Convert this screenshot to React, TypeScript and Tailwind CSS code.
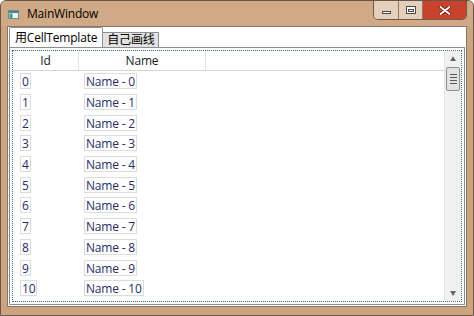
const font = { fontFamily: '"Open Sans", "Noto Sans CJK SC", sans-serif' };

function WindowIcon() {
  return (
    <svg width="11" height="9" viewBox="0 0 11 9" className="mt-[1px]">
      <rect x="0.5" y="0.5" width="10" height="8" fill="#eef3f6" stroke="#6f8a99" />
      <rect x="1" y="1" width="9" height="2" fill="#4d7f96" />
      <rect x="1.5" y="3.5" width="3" height="4.5" fill="#3f9a8c" />
    </svg>
  );
}

function CaptionButtons() {
  return (
    <div className="flex self-start h-[19px] border border-t-0 border-[#6b5a4b] rounded-b-[5px] overflow-hidden">
      <div className="w-[25px] flex items-center justify-center bg-[#e4cfbb] border-r border-[#8d7a68]">
        <div className="w-[9px] h-[3px] mt-[5px] bg-white border border-[#4b4b4b]" />
      </div>
      <div className="w-[24px] flex items-center justify-center bg-[#e4cfbb] border-r border-[#8d7a68]">
        <div className="w-[10px] h-[8px] border border-[#4b4b4b] bg-white flex items-center justify-center">
          <div className="w-[6px] h-[3px] border border-[#4b4b4b] bg-[#f2f2f2]" />
        </div>
      </div>
      <div className="w-[43px] flex items-center justify-center bg-[#c9432c]">
        <svg width="12" height="9" viewBox="0 0 12 9">
          <path d="M1.5 1 L10.5 8 M10.5 1 L1.5 8" stroke="#5a1a10" strokeWidth="3.2" strokeLinecap="round" />
          <path d="M1.5 1 L10.5 8 M10.5 1 L1.5 8" stroke="#ffffff" strokeWidth="1.8" strokeLinecap="round" />
        </svg>
      </div>
    </div>
  );
}

function ScrollBar() {
  return (
    <div className="w-[17px] shrink-0 flex flex-col bg-[#f0f0f0] border-l border-[#e6e6e6]">
      <div className="h-[16px] flex items-center justify-center text-[6px] text-[#606060] leading-none">▲</div>
      <div className="h-[24px] mx-[1px] rounded-[2px] border border-[#8e8f8f] bg-[#e2e2e2] flex flex-col items-center justify-center gap-[2px]">
        <div className="w-[7px] h-[1px] bg-[#5a5a5a]" />
        <div className="w-[7px] h-[1px] bg-[#5a5a5a]" />
        <div className="w-[7px] h-[1px] bg-[#5a5a5a]" />
        <div className="w-[7px] h-[1px] bg-[#5a5a5a]" />
      </div>
      <div className="flex-1" />
      <div className="h-[16px] flex items-center justify-center text-[6px] text-[#606060] leading-none">▼</div>
    </div>
  );
}

export default function App() {
  const rows = Array.from({ length: 14 }, (_, i) => i);
  return (
    <div
      className="w-[474px] h-[316px] flex flex-col bg-[#cca480] border border-[#6a5646] rounded-t-[6px] overflow-hidden text-[12px] tracking-[-0.2px]"
      style={font}
    >
      <div className="h-[25px] flex items-start pl-[7px] pr-[6px] shrink-0 bg-[#d0a986]">
        <div className="flex items-center gap-[8px] mt-[7px]">
          <WindowIcon />
          <span className="leading-none text-black">MainWindow</span>
        </div>
        <div className="flex-1" />
        <CaptionButtons />
      </div>

      <div className="flex-1 min-h-0 mx-[6px] mb-[8px] flex flex-col bg-white border border-[#8a7664]">
        <div className="h-[20px] flex items-end pl-[1px] shrink-0">
          <div className="h-[20px] px-[5px] flex items-center bg-white border border-b-0 border-[#8c8e94] rounded-t-[2px] text-black relative z-10">
            用CellTemplate
          </div>
          <div className="h-[16px] px-[4px] flex items-center bg-[#e2e2e2] border border-l-0 border-[#8c8e94] text-black mb-[-1px]">
            自己画线
          </div>
        </div>

        <div className="flex-1 min-h-0 mx-[1px] mb-[1px] border border-[#8c8e94] p-[2px] flex">
          <div className="flex-1 min-h-0 border border-dotted border-[#4a6a70] flex overflow-hidden">
            <div className="flex-1 min-h-0 flex flex-col overflow-hidden">
              <div className="h-[20px] shrink-0 flex border-b border-[#d5d5d5] text-[#1a1a1a]">
                <div className="w-[66px] flex items-center justify-center border-r border-[#e2e2e2]">Id</div>
                <div className="w-[127px] flex items-center justify-center border-r border-[#e2e2e2]">Name</div>
                <div className="flex-1" />
              </div>
              <div className="flex-1 min-h-0 overflow-hidden pt-[1px]">
                {rows.map((i) => (
                  <div key={i} className="h-[20.7px] flex items-center text-[#1f2d66]">
                    <div className="w-[66px] pl-[7px]">
                      <span className="inline-block h-[16px] leading-[15px] px-[1px] border border-[#dcdcdc]">{i}</span>
                    </div>
                    <div className="pl-[5px]">
                      <span className="inline-block h-[16px] leading-[15px] px-[1px] border border-[#dcdcdc]">Name - {i}</span>
                    </div>
                  </div>
                ))}
              </div>
            </div>
            <ScrollBar />
          </div>
        </div>
      </div>
    </div>
  );
}
